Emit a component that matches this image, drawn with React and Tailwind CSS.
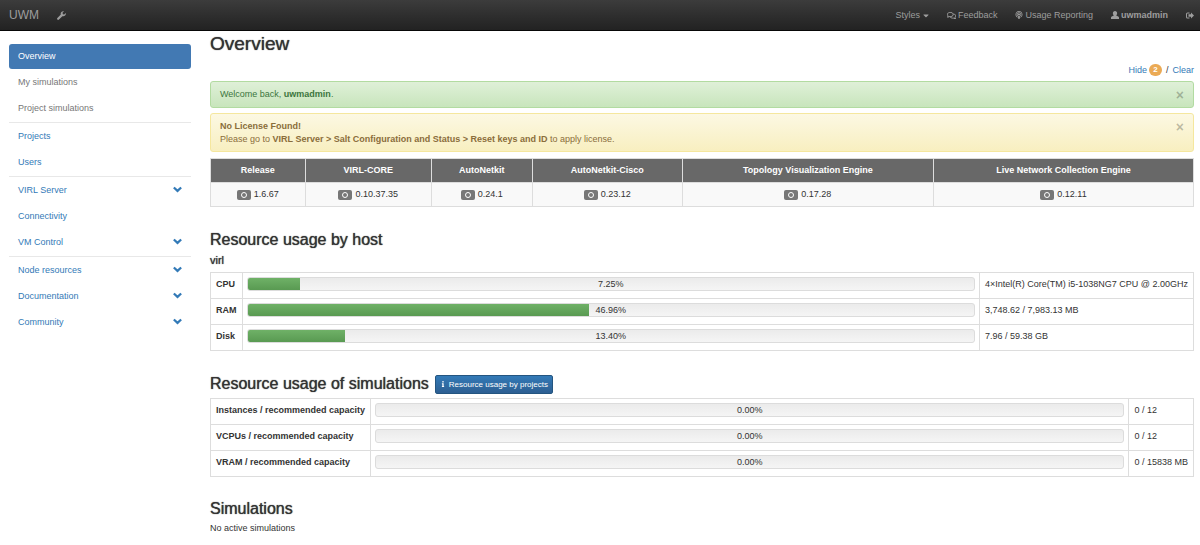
import { FaCaretDown, FaInfo, FaPodcast, FaRegComments } from "react-icons/fa";

const menu = [
  { label: "Overview", active: true },
  { label: "My simulations", muted: true },
  { label: "Project simulations", muted: true },
  { divider: true },
  { label: "Projects" },
  { label: "Users" },
  { divider: true },
  { label: "VIRL Server", expandable: true },
  { label: "Connectivity" },
  { label: "VM Control", expandable: true },
  { divider: true },
  { label: "Node resources", expandable: true },
  { label: "Documentation", expandable: true },
  { label: "Community", expandable: true },
];

const versions = [
  { name: "Release", version: "1.6.67" },
  { name: "VIRL-CORE", version: "0.10.37.35" },
  { name: "AutoNetkit", version: "0.24.1" },
  { name: "AutoNetkit-Cisco", version: "0.23.12" },
  { name: "Topology Visualization Engine", version: "0.17.28" },
  { name: "Live Network Collection Engine", version: "0.12.11" },
];

const hostUsage = [
  {
    label: "CPU",
    percent: 7.25,
    detail: "4×Intel(R) Core(TM) i5-1038NG7 CPU @ 2.00GHz",
  },
  { label: "RAM", percent: 46.96, detail: "3,748.62 / 7,983.13 MB" },
  { label: "Disk", percent: 13.4, detail: "7.96 / 59.38 GB" },
];

const simulationUsage = [
  { label: "Instances / recommended capacity", percent: 0, detail: "0 / 12" },
  { label: "VCPUs / recommended capacity", percent: 0, detail: "0 / 12" },
  { label: "VRAM / recommended capacity", percent: 0, detail: "0 / 15838 MB" },
];

function WrenchIcon() {
  return (
    <svg viewBox="0 0 16 16" className="w-[9px] h-[9px]" fill="currentColor">
      <path d="M15.500 3.500 12.800 6.100 10.400 5.600 9.900 3.200 12.500.5A4.600 4.600 0 0 0 6.800 6.400L.7 12.400a1.900 1.900 0 0 0 2.800 2.800L9.600 9.200A4.600 4.600 0 0 0 15.500 3.500z" />
    </svg>
  );
}

function ChevronDownIcon() {
  return (
    <svg
      viewBox="0 0 16 12"
      className="w-[9px] h-[7px]"
      fill="none"
      stroke="currentColor"
      strokeWidth="4"
    >
      <path d="M1.500 2.500 8 8.500l6.500-6" />
    </svg>
  );
}

function UserIcon() {
  return (
    <svg viewBox="0 0 14 14" className="w-[8px] h-[8px]" fill="currentColor">
      <path d="M7 0C4.600 0 3.300 1.700 3.300 4c0 1.600.7 3.200 1.700 4L1.300 9.500C.5 9.900 0 10.500 0 11.300V14h14v-2.700c0-.8-.5-1.400-1.300-1.800L9 8c1-.8 1.700-2.400 1.700-4C10.700 1.700 9.400 0 7 0z" />
    </svg>
  );
}

function SignOutIcon() {
  return (
    <svg viewBox="0 0 16 14" className="w-[8px] h-[7px]" fill="currentColor">
      <path d="M7 1H3a3 3 0 0 0-3 3v6a3 3 0 0 0 3 3h4v-2H3a1 1 0 0 1-1-1V4a1 1 0 0 1 1-1h4z" />
      <path d="M10 1l6 6-6 6V9.500H5v-5h5z" />
    </svg>
  );
}

function Navbar() {
  return (
    <nav className="h-[31px] flex items-center justify-between pl-[9px] pr-[6px] bg-linear-to-b from-[#3c3c3c] to-[#222222] border-b border-[#080808] text-[#9d9d9d]">
      <div className="flex items-center gap-[18px]">
        <a href="#home" className="text-[12px]">
          UWM
        </a>
        <a href="#tools" aria-label="Tools">
          <WrenchIcon />
        </a>
      </div>

      <div className="flex items-center gap-[18px]">
        <button className="flex items-center gap-[3px]">
          Styles
          <FaCaretDown className="w-[6px] h-[9px]" />
        </button>
        <a href="#feedback" className="flex items-center gap-[2px]">
          <FaRegComments className="w-[9px] h-[9px]" />
          Feedback
        </a>
        <a href="#usage" className="flex items-center gap-[2px]">
          <FaPodcast className="w-[8px] h-[8px]" />
          Usage Reporting
        </a>
        <a href="#account" className="flex items-center gap-[2px] font-bold">
          <UserIcon />
          uwmadmin
        </a>
        <a href="#logout" aria-label="Log out">
          <SignOutIcon />
        </a>
      </div>
    </nav>
  );
}

function Sidebar() {
  return (
    <aside className="w-1/6 shrink-0 px-[9px] pt-[13px]">
      <ul className="flex flex-col gap-px">
        {menu.map((item, index) => {
          if (item.divider) {
            return <li key={index} className="h-px bg-[#e8e8e8]" />;
          }

          let color = "text-[#337ab7]";
          if (item.active) color = "bg-[#4279b3] text-white";
          if (item.muted) color = "text-[#777777]";

          return (
            <li key={index}>
              <a
                href="#menu"
                className={`h-[25px] flex items-center justify-between rounded-[3px] pl-[9px] pr-[9px] ${color}`}
              >
                {item.label}
                {item.expandable && (
                  <span className="pb-[3px]">
                    <ChevronDownIcon />
                  </span>
                )}
              </a>
            </li>
          );
        })}
      </ul>
    </aside>
  );
}

function Alert({ color, children }) {
  return (
    <div
      className={`flex items-start justify-between rounded-[3px] border px-[9px] pt-[6px] pb-[5px] bg-linear-to-b ${color}`}
    >
      <p>{children}</p>
      <button
        aria-label="Close"
        className="pt-[1px] text-[14px] leading-[13px] font-bold text-black/25"
      >
        ×
      </button>
    </div>
  );
}

function VersionTable() {
  return (
    <table className="w-full mt-[6px] border-collapse text-center">
      <thead>
        <tr className="h-[24px] bg-[#686868] text-white">
          {versions.map((item) => (
            <th key={item.name} className="border border-[#dddddd] px-[5px]">
              {item.name}
            </th>
          ))}
        </tr>
      </thead>
      <tbody>
        <tr className="h-[24px] bg-[#f9f9f9]">
          {versions.map((item) => (
            <td key={item.name} className="border border-[#dddddd] px-[5px]">
              <div className="flex items-center justify-center gap-[3px]">
                <span className="w-[14px] h-[10px] flex items-center justify-center rounded-[2px] bg-[#777777]">
                  <span className="w-[6px] h-[6px] rounded-full border border-white" />
                </span>
                {item.version}
              </div>
            </td>
          ))}
        </tr>
      </tbody>
    </table>
  );
}

function UsageTable({ rows }) {
  return (
    <table className="w-full border-collapse">
      <tbody>
        {rows.map((row) => (
          <tr key={row.label} className="h-[26px] align-top">
            <th className="border border-[#dddddd] px-[5px] pt-[5px] text-left whitespace-nowrap">
              {row.label}
            </th>
            <td className="w-full border border-[#dddddd] px-[4px] pt-[4px]">
              <div className="grid h-[14px] rounded-[3px] overflow-hidden border border-[#dcdcdc] bg-linear-to-b from-[#ebebeb] to-[#f5f5f5]">
                <div
                  className="col-start-1 row-start-1 bg-linear-to-b from-[#6fb167] to-[#579850]"
                  style={{ width: `${row.percent}%` }}
                />
                <span className="col-start-1 row-start-1 text-center leading-[13px]">
                  {row.percent.toFixed(2)}%
                </span>
              </div>
            </td>
            <td className="border border-[#dddddd] px-[5px] pt-[5px] whitespace-nowrap">
              {row.detail}
            </td>
          </tr>
        ))}
      </tbody>
    </table>
  );
}

function SectionTitle({ children }) {
  return (
    <h2 className="text-[16px] leading-[20px] [text-shadow:0_0_1px_#333333]">
      {children}
    </h2>
  );
}

export default function App() {
  return (
    <div className="min-h-screen bg-white font-['Liberation_Sans',Arial,sans-serif] text-[9px] leading-[13px] text-[#333333]">
      <Navbar />

      <div className="flex">
        <Sidebar />

        <main className="flex-1 min-w-0 pl-[10px] pr-[6px] pt-[2px]">
          <h1 className="text-[19px] leading-[22px] [text-shadow:0_0_1px_#333333]">
            Overview
          </h1>

          {/* Messages */}
          <div className="mt-[8px] h-[14px] flex items-center justify-end gap-[4px]">
            <a href="#hide" className="flex items-center gap-[2px] text-[#337ab7]">
              Hide
              <span className="w-[13px] h-[12px] rounded-full bg-[#ebaa55] text-white text-[8px] leading-[12px] font-bold text-center">
                2
              </span>
            </a>
            <span>/</span>
            <a href="#clear" className="text-[#337ab7]">
              Clear
            </a>
          </div>

          <div className="mt-[4px] flex flex-col gap-[5px]">
            <Alert color="from-[#dff0d8] to-[#c8e5bc] border-[#b2dba1] text-[#3c763d]">
              Welcome back, <strong>uwmadmin</strong>.
            </Alert>
            <Alert color="from-[#fcf8e3] to-[#f8efc0] border-[#f5e79e] text-[#8a6d3b]">
              <strong>No License Found!</strong>
              <br />
              Please go to{" "}
              <strong>
                VIRL Server &gt; Salt Configuration and Status &gt; Reset keys
                and ID
              </strong>{" "}
              to apply license.
            </Alert>
          </div>

          <VersionTable />

          {/* Host */}
          <div className="mt-[23px] mb-[5px] flex flex-col gap-[3px]">
            <SectionTitle>Resource usage by host</SectionTitle>
            <h3 className="text-[11px] leading-[14px] [text-shadow:0_0_1px_#333333]">
              virl
            </h3>
          </div>
          <UsageTable rows={hostUsage} />

          {/* Simulations */}
          <div className="mt-[23px] mb-[4px] flex items-center gap-[6px]">
            <SectionTitle>Resource usage of simulations</SectionTitle>
            <button className="h-[19px] flex items-center gap-[3px] px-[4px] rounded-[2px] border border-[#245580] bg-linear-to-b from-[#337ab7] to-[#2d5f92] text-[8px] text-white">
              <FaInfo className="w-[6px] h-[6px]" />
              Resource usage by projects
            </button>
          </div>
          <UsageTable rows={simulationUsage} />

          <div className="mt-[22px] flex flex-col gap-[3px]">
            <SectionTitle>Simulations</SectionTitle>
            <p>No active simulations</p>
          </div>
        </main>
      </div>
    </div>
  );
}
